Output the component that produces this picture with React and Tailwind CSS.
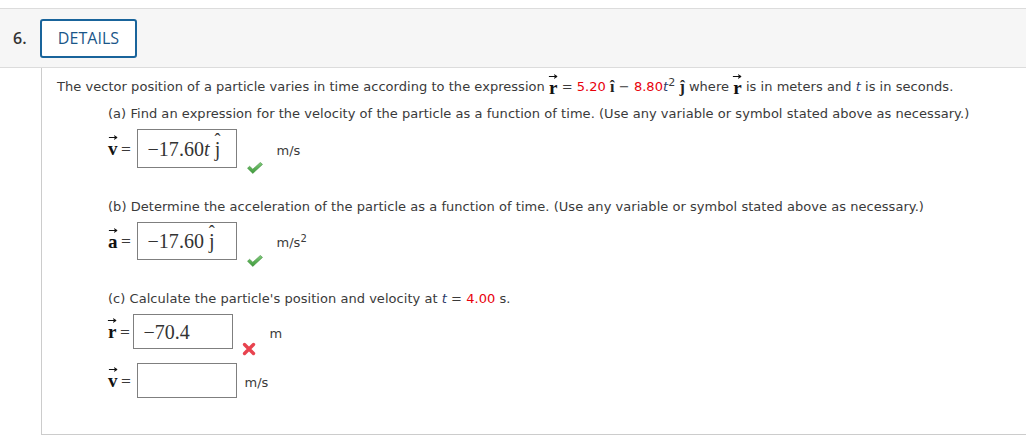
import React from "react";

const sans = { fontFamily: '"DejaVu Sans", Verdana, sans-serif' };
const serif = { fontFamily: '"Liberation Serif", "Times New Roman", serif' };

function Arrow() {
  return (
    <svg width="9" height="5" viewBox="0 0 9 5" className="block">
      <path d="M0.3 2.5H8.2M5.6 0.6L8.4 2.5L5.6 4.4" stroke="#111" strokeWidth="1.1" fill="none" />
    </svg>
  );
}

function Vec({ ch }) {
  return (
    <span className="relative inline-block font-bold text-[19px] leading-none text-[#111]" style={serif}>
      <span className="absolute left-1/2 -translate-x-1/2 top-[-4px]">
        <Arrow />
      </span>
      {ch}
    </span>
  );
}

function Hat({ ch }) {
  return (
    <span className="relative inline-block">
      <span className="absolute left-1/2 -translate-x-1/2 top-[-7px] text-[18px]">ˆ</span>
      {ch}
    </span>
  );
}

function Check() {
  return (
    <svg width="16" height="12" viewBox="0 0 16 12">
      <defs>
        <linearGradient id="cg" x1="0" y1="0" x2="0" y2="1">
          <stop offset="0" stopColor="#7fc97a" />
          <stop offset="1" stopColor="#3d9a3a" />
        </linearGradient>
      </defs>
      <path d="M0.5 6.2L2.6 4.3L5.8 7.2L13.4 0.4L15.5 2.4L5.8 11.4Z" fill="url(#cg)" stroke="#3f8f3c" strokeWidth="0.6" strokeLinejoin="round" />
    </svg>
  );
}

function Cross() {
  return (
    <svg width="14" height="14" viewBox="0 0 14 14">
      <path d="M2.5 2.5L11.5 11.5M11.5 2.5L2.5 11.5" stroke="#e8434f" strokeWidth="3.4" strokeLinecap="round" />
    </svg>
  );
}

function Box({ children, h }) {
  return (
    <div
      className={`ml-[6px] w-[100px] ${h} border border-[#7f7f7f] bg-white flex items-center pl-[9px] text-[20px] text-[#333]`}
      style={serif}
    >
      {children}
    </div>
  );
}

export default function App() {
  return (
    <div className="w-[1026px] h-[436px] bg-white text-[13px] tracking-[0.04px] text-[#3a3a3a] overflow-hidden" style={sans}>
      <div className="h-[8px]" />
      {/* header */}
      <div className="h-[60px] border-y border-[#dcdcdc] bg-[#f6f6f6] flex items-center pl-[13px]">
        <span className="text-[16px] font-semibold text-[#333] w-[27px]" style={{ fontFamily: '"Open Sans", sans-serif' }}>
          6.
        </span>
        <div
          className="w-[97px] h-[39px] border-2 border-[#19649b] rounded-[3px] flex items-center justify-center text-[16px] text-[#1a5689] bg-white"
          style={{ fontFamily: '"Open Sans", sans-serif' }}
        >
          DETAILS
        </div>
      </div>

      {/* content */}
      <div className="ml-[41px] h-[367px] border-l border-b border-[#cccccc] pl-[15px] pt-[10px]">
        <div className="h-[18px] flex items-center whitespace-nowrap">
          <span>The vector position of a particle varies in time according to the expression&nbsp;</span>
          <Vec ch="r" />
          <span>&nbsp;=&nbsp;</span>
          <span className="text-[#e8000b]">5.20</span>
          <span>&nbsp;</span>
          <span className="font-bold text-[16px] text-[#222]" style={serif}>î</span>
          <span>&nbsp;−&nbsp;</span>
          <span className="text-[#e8000b]">8.80</span>
          <span className="italic text-[#2a3a6a]">t</span>
          <sup className="text-[11px] -top-[4px]">2</sup>
          <span>&nbsp;</span>
          <span className="font-bold text-[16px] text-[#222]" style={serif}>ĵ</span>
          <span>&nbsp;where&nbsp;</span>
          <Vec ch="r" />
          <span>&nbsp;is in meters and&nbsp;</span>
          <span className="italic text-[#2a3a6a]">t</span>
          <span>&nbsp;is in seconds.</span>
        </div>

        <div className="ml-[51px]">
          {/* (a) */}
          <div className="mt-[9px] h-[18px] flex items-center whitespace-nowrap">
            (a) Find an expression for the velocity of the particle as a function of time. (Use any variable or symbol stated above as necessary.)
          </div>
          <div className="mt-[6px] h-[39px] flex items-center">
            <Vec ch="v" />
            <span className="ml-[3px]">=</span>
            <Box h="h-[39px]">
              <span>−17.60</span>
              <span className="italic">t</span>
              <span className="ml-[5px]"><Hat ch="j" /></span>
            </Box>
            <div className="self-end -mb-[6px] ml-[10px] h-[12px] flex">
              <Check />
            </div>
            <span className="ml-[13px] mt-[5px]">m/s</span>
          </div>

          {/* (b) */}
          <div className="mt-[30px] h-[18px] flex items-center whitespace-nowrap">
            (b) Determine the acceleration of the particle as a function of time. (Use any variable or symbol stated above as necessary.)
          </div>
          <div className="mt-[6px] h-[38px] flex items-center">
            <Vec ch="a" />
            <span className="ml-[3px]">=</span>
            <Box h="h-[38px]">
              <span>−17.60</span>
              <span className="ml-[5px]"><Hat ch="j" /></span>
            </Box>
            <div className="self-end -mb-[7px] ml-[10px] h-[12px] flex">
              <Check />
            </div>
            <span className="ml-[13px] mt-[4px]">
              m/s<sup className="text-[10px] -top-[5px]">2</sup>
            </span>
          </div>

          {/* (c) */}
          <div className="mt-[30px] h-[18px] flex items-center whitespace-nowrap">
            (c) Calculate the particle's position and velocity at&nbsp;<span className="italic text-[#2a3a6a]">t</span>&nbsp;=&nbsp;
            <span className="text-[#e8000b]">4.00</span>&nbsp;s.
          </div>
          <div className="mt-[6px] h-[35px] flex items-center">
            <Vec ch="r" />
            <span className="ml-[3px]">=</span>
            <div
              className="ml-[3px] w-[100px] h-[35px] border border-[#7f7f7f] bg-white flex items-center pl-[9px] text-[20px] text-[#333]"
              style={serif}
            >
              −70.4
            </div>
            <div className="self-end -mb-[7px] ml-[9px] h-[14px] flex">
              <Cross />
            </div>
            <span className="ml-[13px] mt-[5px]">m</span>
          </div>
          <div className="mt-[14px] h-[35px] flex items-center">
            <Vec ch="v" />
            <span className="ml-[3px]">=</span>
            <div className="ml-[6px] w-[100px] h-[35px] border border-[#7f7f7f] bg-white" />
            <span className="ml-[7px] mt-[4px]">m/s</span>
          </div>
        </div>
      </div>
    </div>
  );
}
